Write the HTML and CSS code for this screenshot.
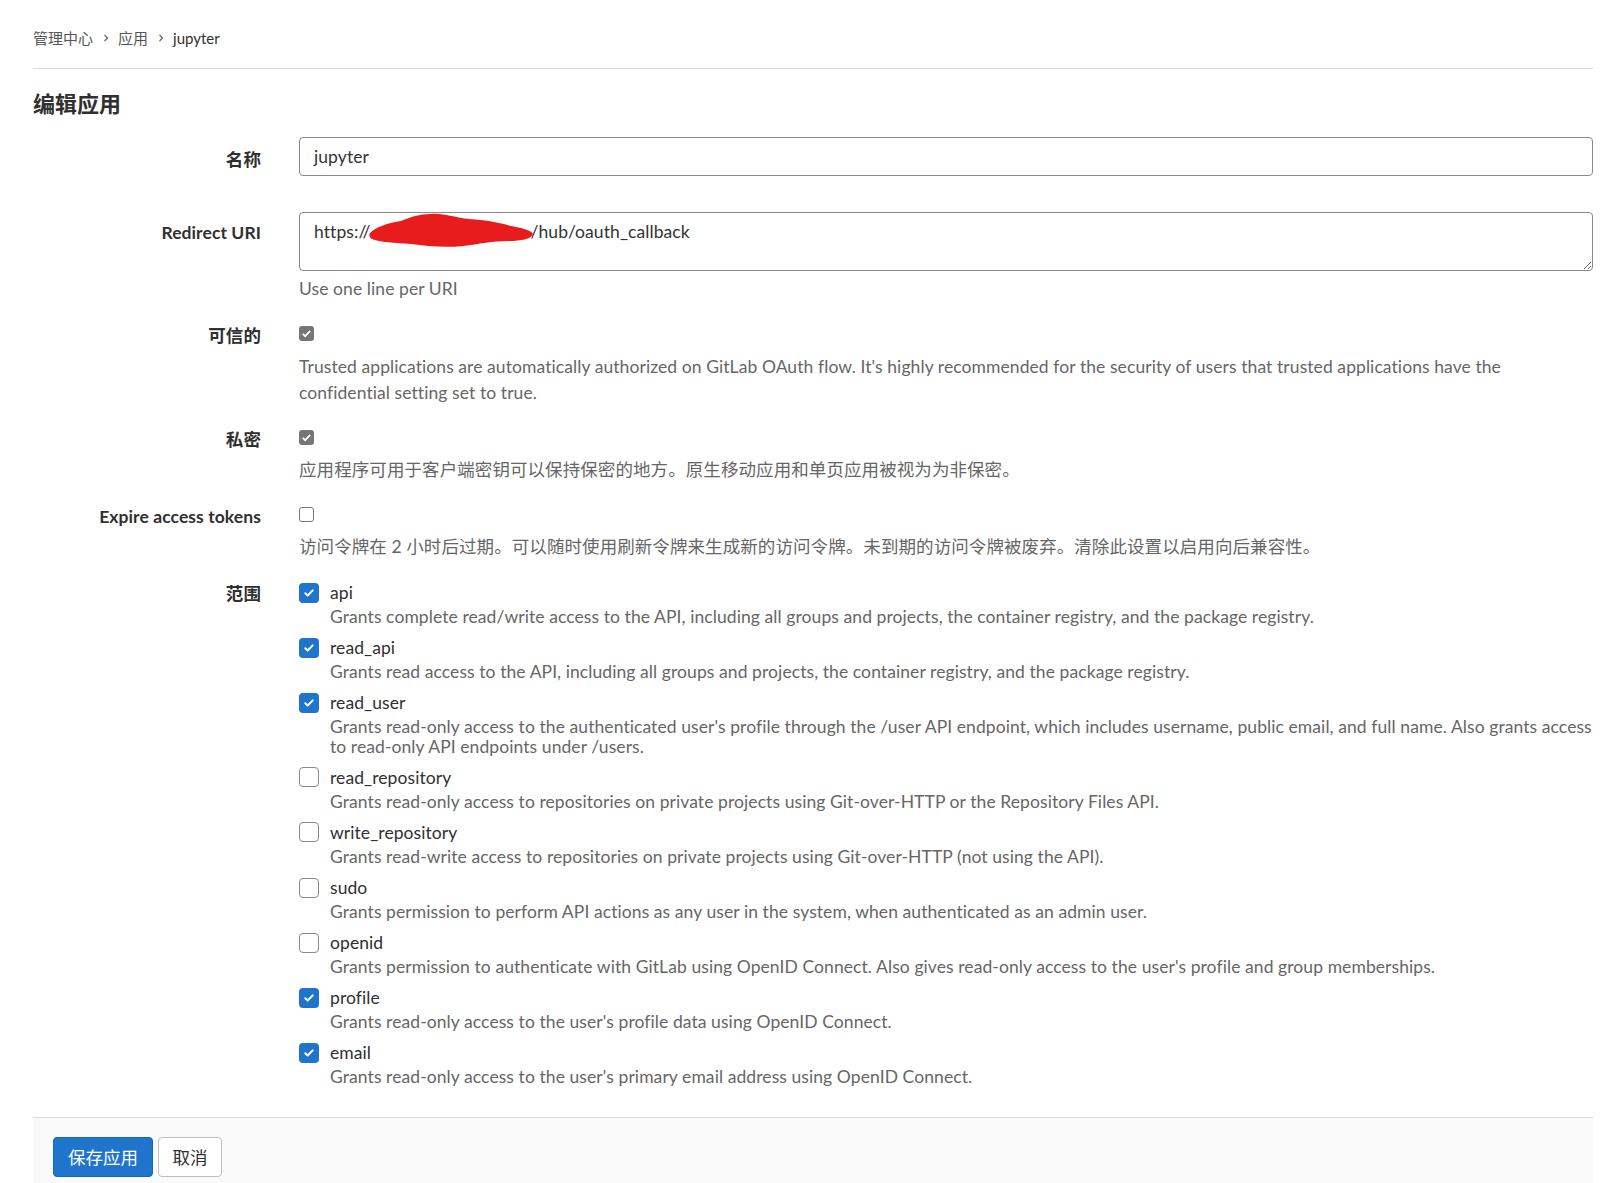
FILE: index.html
```html
<!DOCTYPE html>
<html lang="zh-CN">
<head>
<meta charset="utf-8">
<title>编辑应用</title>
<link rel="stylesheet" href="styles.css">
</head>
<body>
<div class="page">
  <nav class="breadcrumb">
    <a class="crumb">管理中心</a>
    <span class="sep"><svg width="8" height="10" viewBox="0 0 8 10"><path d="M2.5 2 L5.5 5 L2.5 8" fill="none" stroke="#666" stroke-width="1.3"/></svg></span>
    <a class="crumb">应用</a>
    <span class="sep"><svg width="8" height="10" viewBox="0 0 8 10"><path d="M2.5 2 L5.5 5 L2.5 8" fill="none" stroke="#666" stroke-width="1.3"/></svg></span>
    <span class="crumb current">jupyter</span>
  </nav>

  <h3 class="title">编辑应用</h3>

  <form class="form">
    <div class="row row-name">
      <label class="label label-input">名称</label>
      <div class="field"><div class="input">jupyter</div></div>
    </div>

    <div class="row row-uri">
      <label class="label label-uri">Redirect URI</label>
      <div class="field">
        <div class="textarea">https://<span class="redact"><svg width="166" height="38" viewBox="0 0 166 38"><path d="M1 22 C8 15 20 12 32 10 C42 6 50 3 62 3 C76 2 86 7 100 8 C116 9 128 11 142 15 C152 17 162 19 164 23 C162 28 152 30 140 30 C124 30 110 33 94 35 C76 37 58 35 42 33 C26 32 10 31 3 28 C0 26 0 24 1 22 Z" fill="#e81c1c"/></svg></span>/hub/oauth_callback</div>
        <p class="help help-uri">Use one line per URI</p>
      </div>
    </div>

    <div class="row row-check row-first">
      <label class="label label-check">可信的</label>
      <div class="field">
        <div class="check-line"><span class="box box-gray"><svg width="15" height="15" viewBox="0 0 15 15"><path d="M3.8 7.8 L6.2 10.2 L11.2 4.9" fill="none" stroke="#fff" stroke-width="1.8"/></svg></span></div>
        <p class="help help-long">Trusted applications are automatically authorized on GitLab OAuth flow. It's highly recommended for the security of users that trusted applications have the<br>confidential setting set to true.</p>
      </div>
    </div>

    <div class="row row-check">
      <label class="label label-check">私密</label>
      <div class="field">
        <div class="check-line"><span class="box box-gray"><svg width="15" height="15" viewBox="0 0 15 15"><path d="M3.8 7.8 L6.2 10.2 L11.2 4.9" fill="none" stroke="#fff" stroke-width="1.8"/></svg></span></div>
        <p class="help help-long">应用程序可用于客户端密钥可以保持保密的地方。原生移动应用和单页应用被视为为非保密。</p>
      </div>
    </div>

    <div class="row row-check">
      <label class="label label-check">Expire access tokens</label>
      <div class="field">
        <div class="check-line"><span class="box box-empty"></span></div>
        <p class="help help-long">访问令牌在 2 小时后过期。可以随时使用刷新令牌来生成新的访问令牌。未到期的访问令牌被废弃。清除此设置以启用向后兼容性。</p>
      </div>
    </div>

    <div class="row row-scopes">
      <label class="label label-scopes">范围</label>
      <div class="field scopes">
        <div class="scope">
          <div class="scope-head"><span class="sbox on"><svg width="20" height="20" viewBox="0 0 20 20"><path d="M6.3 10.2 L8.7 12.5 L13.7 7.4" fill="none" stroke="#fff" stroke-width="2" stroke-linecap="round" stroke-linejoin="round"/></svg></span><span class="scope-name">api</span></div>
          <p class="scope-desc">Grants complete read/write access to the API, including all groups and projects, the container registry, and the package registry.</p>
        </div>
        <div class="scope">
          <div class="scope-head"><span class="sbox on"><svg width="20" height="20" viewBox="0 0 20 20"><path d="M6.3 10.2 L8.7 12.5 L13.7 7.4" fill="none" stroke="#fff" stroke-width="2" stroke-linecap="round" stroke-linejoin="round"/></svg></span><span class="scope-name">read_api</span></div>
          <p class="scope-desc">Grants read access to the API, including all groups and projects, the container registry, and the package registry.</p>
        </div>
        <div class="scope">
          <div class="scope-head"><span class="sbox on"><svg width="20" height="20" viewBox="0 0 20 20"><path d="M6.3 10.2 L8.7 12.5 L13.7 7.4" fill="none" stroke="#fff" stroke-width="2" stroke-linecap="round" stroke-linejoin="round"/></svg></span><span class="scope-name">read_user</span></div>
          <p class="scope-desc">Grants read-only access to the authenticated user's profile through the /user API endpoint, which includes username, public email, and full name. Also grants access<br>to read-only API endpoints under /users.</p>
        </div>
        <div class="scope">
          <div class="scope-head"><span class="sbox off"></span><span class="scope-name">read_repository</span></div>
          <p class="scope-desc">Grants read-only access to repositories on private projects using Git-over-HTTP or the Repository Files API.</p>
        </div>
        <div class="scope">
          <div class="scope-head"><span class="sbox off"></span><span class="scope-name">write_repository</span></div>
          <p class="scope-desc">Grants read-write access to repositories on private projects using Git-over-HTTP (not using the API).</p>
        </div>
        <div class="scope">
          <div class="scope-head"><span class="sbox off"></span><span class="scope-name">sudo</span></div>
          <p class="scope-desc">Grants permission to perform API actions as any user in the system, when authenticated as an admin user.</p>
        </div>
        <div class="scope">
          <div class="scope-head"><span class="sbox off"></span><span class="scope-name">openid</span></div>
          <p class="scope-desc">Grants permission to authenticate with GitLab using OpenID Connect. Also gives read-only access to the user's profile and group memberships.</p>
        </div>
        <div class="scope">
          <div class="scope-head"><span class="sbox on"><svg width="20" height="20" viewBox="0 0 20 20"><path d="M6.3 10.2 L8.7 12.5 L13.7 7.4" fill="none" stroke="#fff" stroke-width="2" stroke-linecap="round" stroke-linejoin="round"/></svg></span><span class="scope-name">profile</span></div>
          <p class="scope-desc">Grants read-only access to the user's profile data using OpenID Connect.</p>
        </div>
        <div class="scope">
          <div class="scope-head"><span class="sbox on"><svg width="20" height="20" viewBox="0 0 20 20"><path d="M6.3 10.2 L8.7 12.5 L13.7 7.4" fill="none" stroke="#fff" stroke-width="2" stroke-linecap="round" stroke-linejoin="round"/></svg></span><span class="scope-name">email</span></div>
          <p class="scope-desc">Grants read-only access to the user's primary email address using OpenID Connect.</p>
        </div>
      </div>
    </div>

    <div class="footer">
      <button type="button" class="btn btn-primary">保存应用</button>
      <button type="button" class="btn btn-default">取消</button>
    </div>
  </form>
</div>
</body>
</html>
```

FILE: styles.css
```css
html, body {
  margin: 0;
  padding: 0;
  background: #fff;
}
body {
  font-family: Lato, "Noto Sans CJK SC", sans-serif;
  font-size: 17.5px;
  letter-spacing: 0.08px;
  color: #333;
}
.page {
  margin-left: 33px;
  width: 1560px;
}

/* breadcrumb */
.breadcrumb {
  display: flex;
  align-items: center;
  padding-top: 28px;
  padding-bottom: 20px;
  height: 20px;
  border-bottom: 1px solid #dbdbdb;
  font-size: 15px;
  line-height: 20px;
  letter-spacing: 0;
}
.crumb {
  color: #555;
}
.crumb.current {
  color: #303030;
}
.sep {
  display: inline-flex;
  margin: 0 8px 0 9px;
}

.title {
  margin: 20px 0 0;
  font-size: 22px;
  line-height: 30px;
  font-weight: 700;
  color: #303030;
  letter-spacing: 0;
}

/* form grid */
.form {
  margin: 0;
}
.row {
  display: grid;
  grid-template-columns: 228px 1294px;
  column-gap: 38px;
}
.label {
  text-align: right;
  font-weight: 700;
  color: #303030;
}
.help {
  margin: 0;
  color: #666;
}

.row-name {
  margin-top: 18px;
}
.label-input {
  padding-top: 6px;
  line-height: 33px;
}
.input {
  box-sizing: border-box;
  height: 39px;
  border: 1px solid #89888d;
  border-radius: 4px;
  padding: 0 14px;
  line-height: 37px;
  color: #333;
}

.row-uri {
  margin-top: 36px;
}
.label-uri {
  padding-top: 8px;
  line-height: 26px;
}
.textarea {
  box-sizing: border-box;
  height: 59px;
  border: 1px solid #89888d;
  border-radius: 4px;
  padding: 6px 14px;
  line-height: 26px;
  color: #333;
  resize: vertical;
  overflow: hidden;
  white-space: nowrap;
}
.redact {
  display: inline-block;
  width: 160px;
  height: 26px;
  position: relative;
  vertical-align: top;
}
.redact svg {
  position: absolute;
  left: -2px;
  top: -8px;
}
.help-uri {
  margin-top: 8px;
  line-height: 20px;
}

/* checkbox rows */
.row-check {
  margin-top: 20px;
}
.row-first {
  margin-top: 24px;
}
.label-check {
  line-height: 26px;
}
.check-line {
  height: 26px;
  display: flex;
  align-items: flex-start;
}
.box {
  display: inline-block;
  box-sizing: border-box;
  width: 15px;
  height: 15px;
  border-radius: 3px;
  margin-top: 3px;
}
.box svg {
  display: block;
}
.box-gray {
  background: #767676;
}
.box-empty {
  border: 1.5px solid #767676;
  background: #fff;
}
.help-long {
  margin-top: 4.5px;
  line-height: 26.5px;
  white-space: nowrap;
}

/* scopes */
.row-scopes {
  margin-top: 19.5px;
}
.label-scopes {
  padding-top: 1px;
  line-height: 26px;
}
.scope {
  margin-bottom: 8.5px;
}
.scope-head {
  display: flex;
  align-items: center;
  height: 25px;
}
.sbox {
  box-sizing: border-box;
  width: 20px;
  height: 20px;
  border-radius: 4px;
  margin-right: 11px;
  flex: none;
}
.sbox svg {
  display: block;
}
.sbox.on {
  background: #1f75cb;
}
.sbox.off {
  border: 1px solid #89888d;
  background: #fff;
}
.scope-name {
  color: #303030;
  line-height: 25px;
}
.scope-desc {
  margin: 2px 0 0 31px;
  line-height: 19.6px;
  color: #666;
  white-space: nowrap;
}

/* footer */
.footer {
  margin-top: 21.5px;
  border-top: 1px solid #dbdbdb;
  background: #fafafa;
  padding: 19px 20px 40px;
  display: flex;
  gap: 5px;
}
.btn {
  font-family: Lato, "Noto Sans CJK SC", sans-serif;
  font-size: 17.5px;
  height: 40px;
  border-radius: 4px;
  padding: 0;
  cursor: pointer;
}
.btn-primary {
  background: #1f75cb;
  border: 1px solid #1068bf;
  color: #fff;
  width: 100px;
}
.btn-default {
  background: #fff;
  border: 1px solid #bfbfbf;
  color: #303030;
  width: 64px;
}
```
